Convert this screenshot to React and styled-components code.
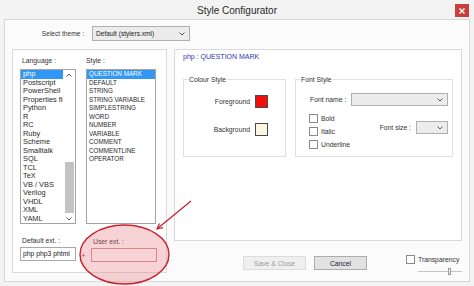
import React from 'react';
import styled, { createGlobalStyle } from 'styled-components';

const LANGUAGES = [
  'php', 'Postscript', 'PowerShell', 'Properties file', 'Python', 'R', 'RC', 'Ruby',
  'Scheme', 'Smalltalk', 'SQL', 'TCL', 'TeX', 'VB / VBS', 'Verilog', 'VHDL', 'XML', 'YAML',
];

const STYLES = [
  'QUESTION MARK', 'DEFAULT', 'STRING', 'STRING VARIABLE', 'SIMPLESTRING', 'WORD',
  'NUMBER', 'VARIABLE', 'COMMENT', 'COMMENTLINE', 'OPERATOR',
];

const Chevron = ({ up }) => (
  <svg width="6" height="4" viewBox="0 0 6 4">
    <polyline
      points={up ? '0.5,3.5 3,1 5.5,3.5' : '0.5,0.5 3,3 5.5,0.5'}
      fill="none"
      stroke="#555"
      strokeWidth="1"
    />
  </svg>
);

const App = () => {
  return (
    <>
      <GlobalStyle />
      <StWindow>
        <StTitleBar>
          <span />
          <StTitle>Style Configurator</StTitle>
          <StClose>
            <svg width="6" height="6" viewBox="0 0 6 6">
              <path d="M0.5 0.5 L5.5 5.5 M5.5 0.5 L0.5 5.5" stroke="#fff" strokeWidth="1.4" />
            </svg>
          </StClose>
        </StTitleBar>

        <StClient>
          <StThemeRow>
            <StThemeLabel>Select theme :</StThemeLabel>
            <StSelect $width={98} $height={15}>
              <span>Default (stylers.xml)</span>
              <Chevron />
            </StSelect>
          </StThemeRow>

          <StMainRow>
            {/* left: language / style lists */}
            <StLeftGroup>
              <StListLabels>
                <StLangLabel>Language :</StLangLabel>
                <span>Style :</span>
              </StListLabels>
              <StListsRow>
                <StListBox $width={56}>
                  <StItems>
                    {LANGUAGES.map((l, i) => (
                      <StItem key={l} $selected={i === 0} $size={7.4}>
                        {l}
                      </StItem>
                    ))}
                  </StItems>
                  <StScrollbar>
                    <StScrollArrow>
                      <Chevron up />
                    </StScrollArrow>
                    <StTrack>
                      <StThumb />
                    </StTrack>
                    <StScrollArrow>
                      <Chevron />
                    </StScrollArrow>
                  </StScrollbar>
                </StListBox>
                <StListBox $width={70}>
                  <StItems>
                    {STYLES.map((s, i) => (
                      <StItem key={s} $selected={i === 0} $size={6.3}>
                        {s}
                      </StItem>
                    ))}
                  </StItems>
                </StListBox>
              </StListsRow>

              <StExtRow>
                <StExtColumn>
                  <StExtLabel>Default ext. :</StExtLabel>
                  <StField $width={56}>php php3 phtml</StField>
                </StExtColumn>
                <StPlus>+</StPlus>
                <StExtColumn $offset={1}>
                  <StExtLabel>User ext. :</StExtLabel>
                  <StField $width={66} $accent />
                </StExtColumn>
              </StExtRow>
            </StLeftGroup>

            {/* right: style settings */}
            <StRightColumn>
              <StRightPanel>
                <StPanelHeading>php : QUESTION MARK</StPanelHeading>
                <StGroupRow>
                  <StGroupBox $width={103}>
                    <StLegend>Colour Style</StLegend>
                    <StColourRows>
                      <StColourRow>
                        <span>Foreground</span>
                        <StSwatch $color="#f20d0d" />
                      </StColourRow>
                      <StColourRow>
                        <span>Background</span>
                        <StSwatch $color="#fcf7e3" />
                      </StColourRow>
                    </StColourRows>
                  </StGroupBox>

                  <StGroupBox $width={158}>
                    <StLegend>Font Style</StLegend>
                    <StFontBody>
                      <StFontNameRow>
                        <span>Font name :</span>
                        <StSelect $width={97} $height={13} $push>
                          <span />
                          <Chevron />
                        </StSelect>
                      </StFontNameRow>
                      <StFontLower>
                        <StChecks>
                          {['Bold', 'Italic', 'Underline'].map((c) => (
                            <StCheckRow key={c}>
                              <StCheckBox />
                              <span>{c}</span>
                            </StCheckRow>
                          ))}
                        </StChecks>
                        <StFontSizeRow>
                          <span>Font size :</span>
                          <StSelect $width={32} $height={13}>
                            <span />
                            <Chevron />
                          </StSelect>
                        </StFontSizeRow>
                      </StFontLower>
                    </StFontBody>
                  </StGroupBox>
                </StGroupRow>
              </StRightPanel>

              <StButtonRow>
                <StButton $width={63} disabled>
                  Save &amp; Close
                </StButton>
                <StButton $width={53}>Cancel</StButton>
                <StTransparency>
                  <StCheckRow>
                    <StCheckBox />
                    <span>Transparency</span>
                  </StCheckRow>
                  <StSlider>
                    <StSliderLine $width={30} />
                    <StSliderThumb />
                    <StSliderLine $width={11} />
                  </StSlider>
                </StTransparency>
              </StButtonRow>
            </StRightColumn>
          </StMainRow>
        </StClient>

        {/* red hand-drawn annotation over the dialog */}
        <StAnnotation width="474" height="286" viewBox="0 0 474 286">
          <ellipse
            cx="124.5"
            cy="254.5"
            rx="44.5"
            ry="29.5"
            fill="rgba(232, 110, 118, 0.3)"
            stroke="#c8202f"
            strokeWidth="1.4"
          />
          <path d="M191 201 L157.5 228.5" stroke="#c8202f" strokeWidth="1.2" fill="none" />
          <path d="M163 227.6 L157 229 L159.4 223.4" stroke="#c8202f" strokeWidth="1.2" fill="none" />
        </StAnnotation>
      </StWindow>
    </>
  );
};

const GlobalStyle = createGlobalStyle`
  *, *::before, *::after {
    box-sizing: border-box;
  }
  html, body {
    margin: 0;
    padding: 0;
    background: #f3f3f3;
  }
  body {
    font-family: "Liberation Sans", Arial, sans-serif;
    font-size: 6.8px;
    color: #333;
  }
`;

const StWindow = styled.div`
  position: relative;
  width: 474px;
  height: 286px;
  overflow: hidden;
  background: #f3f3f3;
  display: flex;
  flex-direction: column;
`;

const StTitleBar = styled.div`
  height: 19px;
  display: grid;
  grid-template-columns: 1fr auto 1fr;
  align-items: center;
`;

const StTitle = styled.div`
  font-size: 10px;
  line-height: 19px;
  padding-top: 1px;
  color: #2a2a2a;
`;

const StClose = styled.div`
  justify-self: end;
  margin-right: 5px;
  margin-top: 1px;
  width: 14px;
  height: 13px;
  background: #c8403e;
  display: flex;
  align-items: center;
  justify-content: center;
`;

const StClient = styled.div`
  margin: 0 4px;
  height: 263px;
  border: 1px solid #d8d8d8;
  background: #fbfbfb;
  display: flex;
  flex-direction: column;
`;

const StThemeRow = styled.div`
  display: flex;
  align-items: center;
  padding: 6px 0 0 31px;
`;

const StThemeLabel = styled.div`
  width: 48px;
  margin-right: 8px;
  text-align: right;
  font-size: 6.6px;
`;

const StSelect = styled.div`
  width: ${({ $width }) => $width}px;
  height: ${({ $height }) => $height}px;
  margin-left: ${({ $push }) => ($push ? 'auto' : '0')};
  border: 1px solid #b0b0b0;
  background: #ececec;
  display: flex;
  align-items: center;
  justify-content: space-between;
  padding: 0 4px 0 3px;
  font-size: 6.6px;
  color: #222;
`;

const StMainRow = styled.div`
  display: flex;
  align-items: flex-start;
  gap: 7px;
  margin-top: 8px;
  padding-left: 7px;
`;

const StLeftGroup = styled.div`
  width: 155px;
  height: 224px;
  border: 1px solid #dadada;
  background: #fff;
  padding-left: 7px;
`;

const StListLabels = styled.div`
  display: flex;
  margin-top: 7px;
  height: 8px;
  line-height: 8px;
`;

const StLangLabel = styled.span`
  width: 66px;
  padding-left: 2px;
`;

const StListsRow = styled.div`
  display: flex;
  gap: 10px;
  margin-top: 4px;
`;

const StListBox = styled.div`
  width: ${({ $width }) => $width}px;
  height: 155px;
  border: 1px solid #a3a3a3;
  background: #fff;
  display: flex;
  overflow: hidden;
`;

const StItems = styled.div`
  flex: 1;
  min-width: 0;
`;

const StItem = styled.div`
  height: 8.5px;
  line-height: 8.5px;
  padding-left: 2px;
  font-size: ${({ $size }) => $size}px;
  white-space: nowrap;
  overflow: hidden;
  background: ${({ $selected }) => ($selected ? '#3296f4' : 'transparent')};
  color: ${({ $selected }) => ($selected ? '#fff' : '#2a2a2a')};
`;

const StScrollbar = styled.div`
  width: 12px;
  display: flex;
  flex-direction: column;
`;

const StScrollArrow = styled.div`
  height: 9px;
  display: flex;
  align-items: center;
  justify-content: center;
`;

const StTrack = styled.div`
  flex: 1;
  display: flex;
  flex-direction: column;
  justify-content: flex-end;
  align-items: center;
`;

const StThumb = styled.div`
  width: 9px;
  height: 51px;
  margin-bottom: 1px;
  background: #c3c3c3;
`;

const StExtRow = styled.div`
  display: flex;
  margin-top: 13px;
`;

const StExtColumn = styled.div`
  display: flex;
  flex-direction: column;
  gap: 2px;
  margin-top: ${({ $offset }) => $offset || 0}px;
`;

const StExtLabel = styled.div`
  height: 8px;
  line-height: 8px;
  padding-left: 2px;
`;

const StField = styled.div`
  width: ${({ $width }) => $width}px;
  height: 14px;
  border: 1px solid ${({ $accent }) => ($accent ? '#d88f93' : '#a8a8a8')};
  background: #fff;
  padding-left: 2px;
  line-height: 12px;
  color: #222;
  white-space: nowrap;
`;

const StPlus = styled.div`
  width: 15px;
  height: 14px;
  align-self: flex-end;
  display: flex;
  align-items: center;
  justify-content: center;
  color: #d0202e;
  font-size: 7px;
`;

const StRightColumn = styled.div`
  width: 288px;
  display: flex;
  flex-direction: column;
`;

const StRightPanel = styled.div`
  height: 192px;
  border: 1px solid #dadada;
  background: #fff;
  padding: 0 8px;
`;

const StPanelHeading = styled.div`
  margin-top: 3px;
  height: 8px;
  line-height: 8px;
  font-size: 7px;
  color: #3237a8;
`;

const StGroupRow = styled.div`
  display: flex;
  gap: 9px;
  margin-top: 18px;
`;

const StGroupBox = styled.div`
  position: relative;
  width: ${({ $width }) => $width}px;
  height: 78px;
  border: 1px solid #e0e0e0;
`;

const StLegend = styled.span`
  position: absolute;
  top: -5px;
  left: 4px;
  padding: 0 1px;
  line-height: 9px;
  background: #fff;
`;

const StColourRows = styled.div`
  display: flex;
  flex-direction: column;
  gap: 15px;
  padding: 15px 17px 0 0;
`;

const StColourRow = styled.div`
  display: flex;
  align-items: center;
  justify-content: flex-end;
  gap: 5px;
`;

const StSwatch = styled.div`
  width: 13px;
  height: 13px;
  border: 1px solid #4a4a4a;
  background: ${({ $color }) => $color};
`;

const StFontBody = styled.div`
  padding: 13px 4px 0 14px;
`;

const StFontNameRow = styled.div`
  display: flex;
  align-items: center;
`;

const StFontLower = styled.div`
  display: flex;
  align-items: flex-start;
  margin-top: 6px;
`;

const StChecks = styled.div`
  display: flex;
  flex-direction: column;
  margin-left: -1px;
`;

const StCheckRow = styled.div`
  height: 13px;
  display: flex;
  align-items: center;
  gap: 3px;
`;

const StCheckBox = styled.div`
  width: 9px;
  height: 9px;
  border: 1px solid #8a8a8a;
  background: #fff;
`;

const StFontSizeRow = styled.div`
  display: flex;
  align-items: center;
  gap: 5px;
  margin: 9px 0 0 auto;
`;

const StButtonRow = styled.div`
  display: flex;
  align-items: flex-start;
  gap: 8px;
  margin-top: 15px;
  padding-left: 69px;
`;

const StButton = styled.button`
  width: ${({ $width }) => $width}px;
  height: 14px;
  padding: 0;
  font-family: inherit;
  font-size: 6.8px;
  border: 1px solid ${({ disabled }) => (disabled ? '#dcdcdc' : '#adadad')};
  background: ${({ disabled }) => (disabled ? '#efefef' : '#e2e2e2')};
  color: ${({ disabled }) => (disabled ? '#9c9c9c' : '#222')};
`;

const StTransparency = styled.div`
  margin-left: auto;
  width: 56px;
  display: flex;
  flex-direction: column;
  margin-top: -3px;
`;

const StSlider = styled.div`
  display: flex;
  align-items: center;
  height: 8px;
  margin: 1px 0 0 12px;
`;

const StSliderLine = styled.div`
  width: ${({ $width }) => $width}px;
  height: 1px;
  background: #c4c4c4;
`;

const StSliderThumb = styled.div`
  width: 3px;
  height: 7px;
  border: 1px solid #9a9a9a;
  background: #f2f2f2;
`;

const StAnnotation = styled.svg`
  position: absolute;
  top: 0;
  left: 0;
  pointer-events: none;
`;

export default App;
